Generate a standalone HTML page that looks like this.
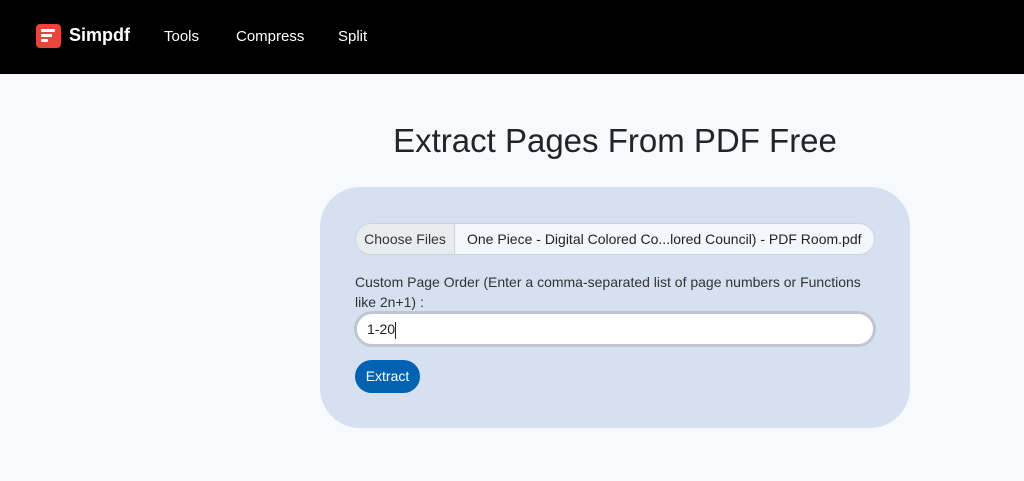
<!DOCTYPE html>
<html><head><meta charset="utf-8"><style>
*{box-sizing:border-box;margin:0;padding:0}
body{width:1024px;height:481px;background:#f8f9fd;font-family:"Liberation Sans",sans-serif;overflow:hidden;position:relative;color:#212529}
.nav{position:absolute;left:0;top:0;width:1024px;height:74px;background:#000}
.logo{position:absolute;left:36px;top:24px;width:25px;height:24px;background:#e8453c;border-radius:4px}
.logo i{position:absolute;left:5px;height:3px;background:#fff;border-radius:1px}
.brand{position:absolute;left:69px;top:25px;color:#fff;font-size:18px;font-weight:bold}
.link{position:absolute;top:28px;color:#fff;font-size:15px}
h1{position:absolute;left:0;width:1230px;text-align:center;top:122px;font-size:33px;font-weight:normal;color:#212529}
.card{position:absolute;left:320px;top:187px;width:590px;height:241px;background:#d5e0f0;border-radius:40px}
.file{position:absolute;left:35px;top:36px;width:520px;height:32px;border:1px solid #ccd3dc;border-radius:16px;background:#f3f6fb;font-size:14px;overflow:hidden}
.file .b{position:absolute;left:0;top:0;width:99px;height:30px;background:#e9ecef;border-right:1px solid #ccd3dc;line-height:30px;text-align:center;color:#333}
.file .n{position:absolute;left:111px;top:0;line-height:30px;color:#222}
.lbl{position:absolute;left:35px;top:85px;width:520px;font-size:14px;line-height:20px;color:#333}
.inp{position:absolute;left:34px;top:124px;width:522px;height:36px;background:#fff;border:3px solid #c0c6cf;border-radius:18px;font-size:14px;line-height:30px;padding-left:10px;color:#222}
.inp span{display:inline-block;width:1px;height:17px;background:#222;vertical-align:middle}
.btn{position:absolute;left:35px;top:173px;width:65px;height:33px;background:#0062b0;border-radius:17px;color:#fff;font-size:14px;line-height:33px;text-align:center}
</style></head><body>
<div class="nav">
<div class="logo"><i style="top:5px;width:14px"></i><i style="top:10px;width:11px"></i><i style="top:15px;width:7px"></i></div>
<div class="brand">Simpdf</div>
<div class="link" style="left:164px">Tools</div>
<div class="link" style="left:236px">Compress</div>
<div class="link" style="left:338px">Split</div>
</div>
<h1>Extract Pages From PDF Free</h1>
<div class="card">
<div class="file"><div class="b">Choose Files</div><div class="n">One Piece - Digital Colored Co...lored Council) - PDF Room.pdf</div></div>
<div class="lbl">Custom Page Order (Enter a comma-separated list of page numbers or Functions like 2n+1) :</div>
<div class="inp">1-20<span></span></div>
<div class="btn">Extract</div>
</div>
</body></html>
